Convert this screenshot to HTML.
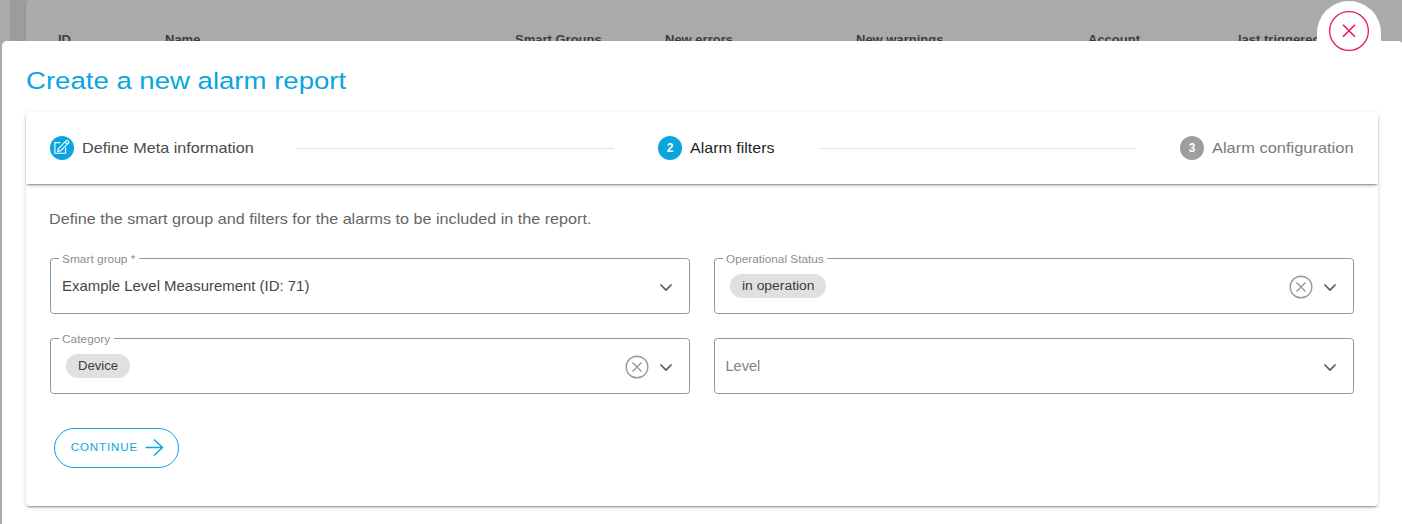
<!DOCTYPE html>
<html><head><meta charset="utf-8">
<style>
*{box-sizing:border-box;margin:0;padding:0}
html,body{width:1402px;height:524px;overflow:hidden;background:#aaaaaa;font-family:"Liberation Sans",sans-serif}
.abs{position:absolute}
.t{position:absolute;white-space:nowrap;line-height:1;transform-origin:0 0}
#band{left:10px;top:0;width:22px;height:524px;background:#9c9c9c}
#bgcard{left:26px;top:0;width:1400px;height:524px;background:#aaaaaa;border-radius:4px;box-shadow:0 1px 3px rgba(0,0,0,.12)}
.th{font-weight:bold;font-size:13px;color:#3e3e3e;top:33.3px}
#modal{left:2px;top:41px;width:1401px;height:520px;background:#fff;border-radius:5px}
#closebg{left:1317.4px;top:1px;width:64px;height:70px;border-radius:32px 32px 0 0;background:#fff}
#title{left:26px;top:69.2px;font-size:24.5px;color:#08a5e1;transform:scaleX(1.125)}
#card{left:26px;top:112px;width:1352px;height:394px;background:#fff;border-radius:4px;
 box-shadow:0px 3px 1px -2px rgba(0,0,0,0.2),0px 2px 2px 0px rgba(0,0,0,0.14),0px 1px 5px 0px rgba(0,0,0,0.12)}
#hdr{left:26px;top:112px;width:1352px;height:72px;background:#fff;border-radius:4px 4px 0 0;
 box-shadow:0 2px 2px -1.5px rgba(0,0,0,0.4),0 3px 5px -2.5px rgba(0,0,0,0.18)}
.circ{position:absolute;width:24px;height:24px;border-radius:50%;color:#fff;font-size:12px;font-weight:bold;text-align:center;line-height:24px}
.step{font-size:14.5px;top:140.8px}
.line{position:absolute;height:1px;background:#e2e2e2;top:148px}
.fld{position:absolute;border:1px solid #959595;border-radius:3.5px;height:56px}
.lab{font-size:10px;color:#8e8e8e}
.chip{position:absolute;height:24px;border-radius:12px;background:#e0e0e0}
.gap{position:absolute;height:4px;background:#fff}
.ctext{font-size:12px;color:#3c3c3c}
</style></head><body>
<div id="band" class="abs"></div>
<div id="bgcard" class="abs"></div>
<div class="t th" style="left:58px">ID</div>
<div class="t th" style="left:165px">Name</div>
<div class="t th" style="left:515px">Smart Groups</div>
<div class="t th" style="left:665px">New errors</div>
<div class="t th" style="left:856px">New warnings</div>
<div class="t th" style="left:1088px">Account</div>
<div class="t th" style="left:1238px">last triggered</div>

<div id="modal" class="abs"></div>
<div id="closebg" class="abs"></div>
<svg class="abs" style="left:1329.4px;top:10.75px" width="40" height="40" viewBox="0 0 40 40">
 <circle cx="20" cy="20" r="19.35" fill="none" stroke="#ea1a4c" stroke-width="1.3"/>
 <path d="M14 13.8 L26 25.8 M26 13.8 L14 25.8" stroke="#ea1a4c" stroke-width="1.6" fill="none"/>
</svg>

<div id="title" class="t">Create a new alarm report</div>

<div id="card" class="abs"></div>
<div id="hdr" class="abs"></div>

<div class="circ" style="left:50px;top:136px;background:#08a5e1"></div>
<svg class="abs" style="left:50px;top:136px" width="24" height="24" viewBox="0 0 24 24">
 <path d="M10.3 6.6 H4.9 V17.3 H15.6 V11.8" fill="none" stroke="#fff" stroke-width="1.1"/>
 <path d="M7.6 15.6 L8.4 12.6 L16.4 4.6 Q17.1 3.9 17.8 4.6 L18.6 5.4 Q19.3 6.1 18.6 6.8 L10.6 14.8 Z M15.1 5.9 L17.3 8.1" fill="none" stroke="#fff" stroke-width="1.1" stroke-linejoin="round"/>
</svg>
<div id="s1" class="t step" style="left:82px;color:#4a4a4a;transform:scaleX(1.115)">Define Meta information</div>
<div class="line" style="left:296px;width:318px"></div>
<div class="circ" style="left:658px;top:136px;background:#08a5e1">2</div>
<div id="s2" class="t step" style="left:690px;color:#1f1f1f;transform:scaleX(1.105)">Alarm filters</div>
<div class="line" style="left:819px;width:317px"></div>
<div class="circ" style="left:1180px;top:136px;background:#9e9e9e">3</div>
<div id="s3" class="t step" style="left:1212px;color:#7a7a7a;transform:scaleX(1.133)">Alarm configuration</div>

<div id="desc" class="t" style="left:49px;top:210.6px;font-size:15px;color:#666;transform:scaleX(1.077)">Define the smart group and filters for the alarms to be included in the report.</div>

<!-- row 1 -->
<div class="fld" style="left:50px;top:258px;width:640px"></div>
<div class="gap" style="left:59px;top:256px;width:80px"></div>
<div id="l1" class="t lab" style="left:62px;top:255.1px;transform:scaleX(1.19)">Smart group *</div>
<div id="v1" class="t" style="left:61.5px;top:278.9px;font-size:14.5px;color:#474747;transform:scaleX(1.03)">Example Level Measurement (ID: 71)</div>
<svg class="abs" style="left:653.5px;top:274.5px" width="24" height="24" viewBox="0 0 24 24"><path d="M6.5 9.5 L12 15 L17.5 9.5" fill="none" stroke="#555" stroke-width="1.6"/></svg>

<div class="fld" style="left:714px;top:258px;width:640px"></div>
<div class="gap" style="left:723px;top:256px;width:104px"></div>
<div id="l2" class="t lab" style="left:726px;top:255.1px;transform:scaleX(1.18)">Operational Status</div>
<div class="chip" style="left:730px;top:274px;width:96px"></div>
<div id="c1" class="t ctext" style="left:741.5px;top:279.7px;transform:scaleX(1.156)">in operation</div>
<svg class="abs" style="left:1289px;top:275px" width="24" height="24" viewBox="0 0 24 24"><circle cx="12" cy="12" r="10.8" fill="none" stroke="#9a9a9a" stroke-width="1.4"/><path d="M7.5 7.5 L16.5 16.5 M16.5 7.5 L7.5 16.5" stroke="#9e9e9e" stroke-width="1.5"/></svg>
<svg class="abs" style="left:1317.5px;top:274.5px" width="24" height="24" viewBox="0 0 24 24"><path d="M6.5 9.5 L12 15 L17.5 9.5" fill="none" stroke="#555" stroke-width="1.6"/></svg>

<!-- row 2 -->
<div class="fld" style="left:50px;top:338px;width:640px"></div>
<div class="gap" style="left:59px;top:336px;width:55px"></div>
<div id="l3" class="t lab" style="left:62px;top:335.1px;transform:scaleX(1.19)">Category</div>
<div class="chip" style="left:66px;top:354px;width:64px"></div>
<div id="c2" class="t ctext" style="left:77.5px;top:359.7px;transform:scaleX(1.094)">Device</div>
<svg class="abs" style="left:625px;top:355px" width="24" height="24" viewBox="0 0 24 24"><circle cx="12" cy="12" r="10.8" fill="none" stroke="#9a9a9a" stroke-width="1.4"/><path d="M7.5 7.5 L16.5 16.5 M16.5 7.5 L7.5 16.5" stroke="#9e9e9e" stroke-width="1.5"/></svg>
<svg class="abs" style="left:653.5px;top:354.5px" width="24" height="24" viewBox="0 0 24 24"><path d="M6.5 9.5 L12 15 L17.5 9.5" fill="none" stroke="#555" stroke-width="1.6"/></svg>

<div class="fld" style="left:714px;top:338px;width:640px"></div>
<div id="v4" class="t" style="left:725.5px;top:358.8px;font-size:14.5px;color:#838383">Level</div>
<svg class="abs" style="left:1317.5px;top:354.5px" width="24" height="24" viewBox="0 0 24 24"><path d="M6.5 9.5 L12 15 L17.5 9.5" fill="none" stroke="#555" stroke-width="1.6"/></svg>

<!-- button -->
<div class="abs" style="left:54px;top:428px;width:125px;height:40px;border:1px solid #08a5e1;border-radius:20px"></div>
<div id="btn" class="t" style="left:70.8px;top:442px;font-size:11.5px;color:#08a5e1;letter-spacing:0.9px">CONTINUE</div>
<svg class="abs" style="left:144px;top:438px" width="20" height="20" viewBox="0 0 20 20"><path d="M1.5 9.5 H18.5 M10 1.5 L18.5 9.5 L10 17.5" fill="none" stroke="#08a5e1" stroke-width="1.5"/></svg>
</body></html>
